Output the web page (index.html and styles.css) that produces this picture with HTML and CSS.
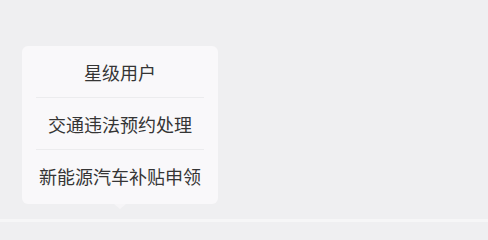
FILE: index.html
```html
<!DOCTYPE html>
<html lang="zh-CN">
<head>
<meta charset="utf-8">
<title>Menu</title>
<link rel="stylesheet" href="styles.css">
</head>
<body>
<div class="page">
  <div class="popover">
    <div class="item">星级用户</div>
    <div class="item">交通违法预约处理</div>
    <div class="item">新能源汽车补贴申领</div>
    <div class="arrow"></div>
  </div>
  <div class="spacer"></div>
  <div class="strip"></div>
</div>
</body>
</html>
```

FILE: styles.css
```css
html, body {
  margin: 0;
  padding: 0;
  background: #efeff1;
}
.page {
  height: 222px;
  display: flex;
  flex-direction: column;
  font-family: "Noto Sans CJK SC", "Noto Sans", sans-serif;
}
.popover {
  position: relative;
  margin: 46px 0 0 22px;
  width: 196px;
  background: #f9f8fa;
  border-radius: 6px;
  padding-bottom: 3px;
}
.item {
  height: 51px;
  display: flex;
  align-items: center;
  justify-content: center;
  font-size: 18px;
  color: #353535;
  margin: 0 14px;
}
.item + .item {
  border-top: 1px solid #ececee;
}
.arrow {
  position: absolute;
  left: 92px;
  bottom: -5px;
  width: 0;
  height: 0;
  border-left: 6px solid transparent;
  border-right: 6px solid transparent;
  border-top: 5px solid #f6f5f7;
}
.spacer {
  flex: 1;
}
.strip {
  height: 3px;
  background: #f6f6f7;
}
```
